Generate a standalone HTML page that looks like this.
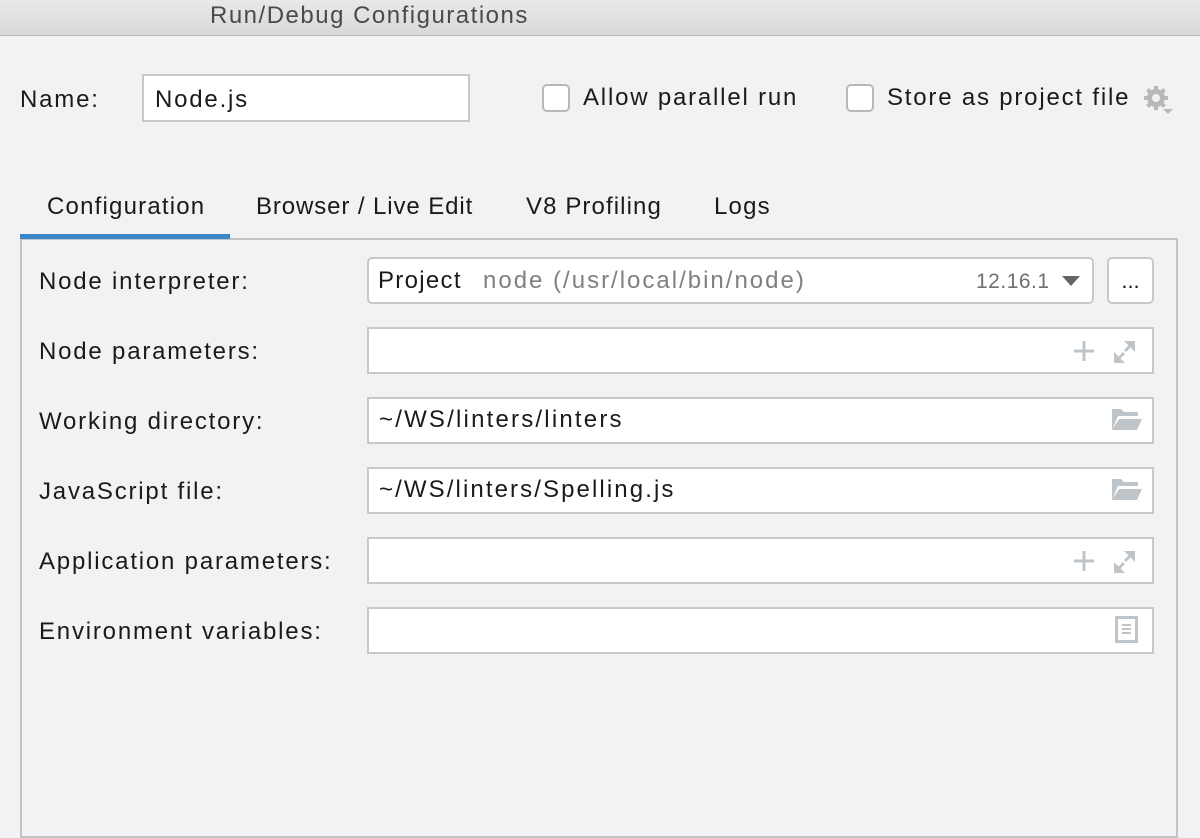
<!DOCTYPE html>
<html><head><meta charset="utf-8"><style>
*{margin:0;padding:0;box-sizing:border-box}
body{width:1200px;height:800px;background:#f2f2f5;font-family:"Liberation Sans",sans-serif;position:relative;overflow:hidden;color:#1a1a1a;letter-spacing:1.8px}
.a{position:absolute}
.t{font-size:24px;line-height:28px;white-space:nowrap}
.f{position:absolute;left:367px;width:787px;height:47px;background:#fff;border:2px solid #c8c8c8}
.lbl{position:absolute;left:39px;font-size:24px;white-space:nowrap}
.val{position:absolute;left:10px;top:7px;font-size:24px}
.cb{position:absolute;width:28px;height:28px;border:2px solid #b8b8b8;border-radius:5px;background:#fff}
</style></head><body>
<div class="a" style="left:0;top:0;width:1200px;height:36px;background:linear-gradient(#e9e9e9,#d8d8d8);border-bottom:1px solid #b8b8b8"></div>
<div class="a t" style="left:210px;top:2px;color:#4a4a4a;letter-spacing:1.5px">Run/Debug Configurations</div>

<div class="a t" style="left:20px;top:86px">Name:</div>
<div class="a" style="left:142px;top:74px;width:328px;height:48px;background:#fff;border:2px solid #c8c8c8"></div>
<div class="a t" style="left:155px;top:86px">Node.js</div>
<div class="cb" style="left:542px;top:84px"></div>
<div class="a t" style="left:583px;top:84px">Allow parallel run</div>
<div class="cb" style="left:846px;top:84px"></div>
<div class="a t" style="left:887px;top:84px">Store as project file</div>
<svg class="a" style="left:1142px;top:84px" width="32" height="32" viewBox="0 0 32 32"><g fill="#b8b8b8"><circle cx="14" cy="14" r="9"/><g stroke="#b8b8b8" stroke-width="4"><line x1="14" y1="2" x2="14" y2="26"/><line x1="2" y1="14" x2="26" y2="14"/><line x1="5.5" y1="5.5" x2="22.5" y2="22.5"/><line x1="22.5" y1="5.5" x2="5.5" y2="22.5"/></g><path d="M21 25h10l-5 5z"/></g><circle cx="14" cy="14" r="4" fill="#f2f2f5"/></svg>

<div class="a t" style="left:47px;top:193px;letter-spacing:1.2px">Configuration</div>
<div class="a t" style="left:256px;top:193px;letter-spacing:0.9px">Browser / Live Edit</div>
<div class="a t" style="left:526px;top:193px;letter-spacing:1.1px">V8 Profiling</div>
<div class="a t" style="left:714px;top:193px;letter-spacing:1.2px">Logs</div>
<div class="a" style="left:20px;top:238px;width:1158px;height:600px;border:2px solid #c4c4c4"></div>
<div class="a" style="left:20px;top:234px;width:210px;height:5px;background:#3a87c8"></div>

<div class="lbl" style="top:268px">Node interpreter:</div>
<div class="a" style="left:367px;top:257px;width:727px;height:47px;background:#fff;border:2px solid #c8c8c8;border-radius:5px"></div>
<div class="a t" style="left:378px;top:267px;letter-spacing:1.3px">Project</div>
<div class="a t" style="left:483px;top:267px;letter-spacing:2px;color:#808080">node (/usr/local/bin/node)</div>
<div class="a" style="left:976px;top:270px;font-size:21px;color:#707070;letter-spacing:0.5px">12.16.1</div>
<svg class="a" style="left:1061px;top:275px" width="20" height="12"><path d="M1 1h18l-9 10z" fill="#666"/></svg>
<div class="a" style="left:1107px;top:257px;width:47px;height:47px;background:#fff;border:2px solid #c8c8c8;border-radius:5px;text-align:center;font-size:22px;line-height:44px;letter-spacing:0">...</div>

<div class="lbl" style="top:338px">Node parameters:</div>
<div class="f" style="top:327px"></div>
<div class="lbl" style="top:408px">Working directory:</div>
<div class="f" style="top:397px"><div class="val" style="letter-spacing:2.2px">~/WS/linters/linters</div></div>
<div class="lbl" style="top:478px">JavaScript file:</div>
<div class="f" style="top:467px"><div class="val" style="letter-spacing:2.1px">~/WS/linters/Spelling.js</div></div>
<div class="lbl" style="top:548px">Application parameters:</div>
<div class="f" style="top:537px"></div>
<div class="lbl" style="top:618px">Environment variables:</div>
<div class="f" style="top:607px"></div>

<svg class="a" style="left:1072px;top:338px" width="70" height="26"><g stroke="#bfc4c9" stroke-width="3" fill="none"><path d="M12 3v20M2 13h20"/><path d="M44 23l8-8M61 5l-8 8"/></g><path d="M42 14v11h11z M63 3v11L52 3z" fill="#bfc4c9"/></svg>
<svg class="a" style="left:1072px;top:548px" width="70" height="26"><g stroke="#bfc4c9" stroke-width="3" fill="none"><path d="M12 3v20M2 13h20"/><path d="M44 23l8-8M61 5l-8 8"/></g><path d="M42 14v11h11z M63 3v11L52 3z" fill="#bfc4c9"/></svg>
<svg class="a" style="left:1111px;top:408px" width="32" height="24"><path d="M1 1h9l3 3h14v4H7L1 22z M8 11h23l-5 11H1z" fill="#bfc4c9"/></svg>
<svg class="a" style="left:1111px;top:478px" width="32" height="24"><path d="M1 1h9l3 3h14v4H7L1 22z M8 11h23l-5 11H1z" fill="#bfc4c9"/></svg>
<svg class="a" style="left:1115px;top:616px" width="24" height="28"><rect x="1.5" y="1.5" width="20" height="24" fill="none" stroke="#bfc4c9" stroke-width="3"/><path d="M7 9h9M7 13h9M7 17h9" stroke="#bfc4c9" stroke-width="2"/></svg>
</body></html>
